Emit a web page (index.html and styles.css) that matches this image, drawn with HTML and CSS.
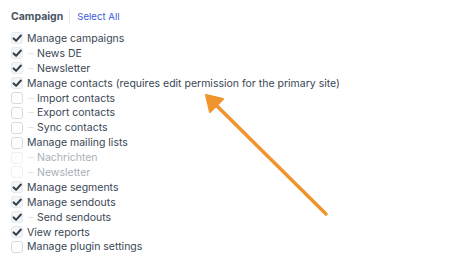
FILE: index.html
```html
<!DOCTYPE html>
<html lang="en">
<head>
    <meta charset="UTF-8">
    <title>Campaign permissions</title>
    <link rel="stylesheet" href="styles.css">
</head>
<body>

<div class="perms">
    <div class="perms-head">
        <span class="perms-title">Campaign</span>
        <a class="select-all" href="#">Select All</a>
    </div>
    <ul class="perm-list">
        <li class="checked">Manage campaigns</li>
        <li class="checked nested">News DE</li>
        <li class="checked nested">Newsletter</li>
        <li class="checked">Manage contacts (requires edit permission for the primary site)</li>
        <li class="nested">Import contacts</li>
        <li class="nested">Export contacts</li>
        <li class="nested">Sync contacts</li>
        <li>Manage mailing lists</li>
        <li class="nested disabled">Nachrichten</li>
        <li class="nested disabled">Newsletter</li>
        <li class="checked">Manage segments</li>
        <li class="checked">Manage sendouts</li>
        <li class="checked nested">Send sendouts</li>
        <li class="checked">View reports</li>
        <li>Manage plugin settings</li>
    </ul>
</div>

<svg class="arrow" width="474" height="260" viewBox="0 0 474 260">
    <line x1="326" y1="214" x2="214" y2="103" stroke="#f0942e" stroke-width="3.5" stroke-linecap="round"/>
    <polygon points="206,95 223,99 210,112" fill="#f0942e" stroke="#f0942e" stroke-width="2" stroke-linejoin="round"/>
</svg>

</body>
</html>
```

FILE: styles.css
```css
body {
    margin: 0;
    background: #fff;
    font-family: 'Inter', 'Noto Sans', sans-serif;
    font-size: 10.5px;
    color: #3a4654;
}
.perms {
    padding: 8px 11px;
}
.perms-head {
    display: flex;
    align-items: center;
    height: 16px;
    margin-bottom: 7px;
}
.perms-title {
    font-weight: 700;
    font-size: 10.5px;
    color: #4a5665;
    padding-right: 6px;
    border-right: 1px solid #e4e8ec;
}
.select-all {
    color: #3b5bdb;
    text-decoration: none;
    font-size: 9.6px;
    margin-left: 7px;
}
.perm-list {
    list-style: none;
    margin: 0;
    padding: 0;
}
.perm-list li {
    display: flex;
    align-items: center;
    height: 14.9px;
    white-space: nowrap;
}
/* checkbox */
.perm-list li::before {
    content: '';
    flex: none;
    box-sizing: border-box;
    width: 12px;
    height: 12px;
    margin-right: 4px;
    border: 1px solid #d5dbe1;
    border-radius: 3px;
    background: #fff;
}
.perm-list li.checked::before {
    border-color: #e6e9ed;
    background: #f3f5f7 url("data:image/svg+xml,%3Csvg xmlns='http://www.w3.org/2000/svg' viewBox='0 0 12 12'%3E%3Cpath d='M2.2 6.2 4.8 8.7 9.8 3.2' fill='none' stroke='%23333f4d' stroke-width='2.1' stroke-linecap='round' stroke-linejoin='round'/%3E%3C/svg%3E") center / 11px no-repeat;
}
/* dash linking sub-items */
.perm-list li.nested {
    background: linear-gradient(#e4e8ec, #e4e8ec) 17px 50% / 6px 1px no-repeat;
}
.perm-list li.nested::before {
    margin-right: 14px;
}
.perm-list li.disabled {
    color: #a8b0b9;
}
.perm-list li.disabled::before {
    border-color: #eef0f2;
}
.arrow {
    position: absolute;
    left: 0;
    top: 0;
    pointer-events: none;
}
```
